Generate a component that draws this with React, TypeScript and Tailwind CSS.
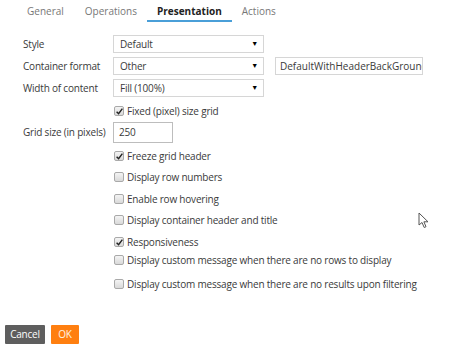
import React from 'react';

const font = { fontFamily: '"Open Sans", "Noto Sans", sans-serif' };

const Check: React.FC<{ checked?: boolean }> = ({ checked }) => (
  <span className="relative inline-block w-[10px] h-[10px] rounded-[2px] border border-[#a9a9a9] bg-gradient-to-b from-[#f4f4f4] to-[#d9d9d9] shrink-0">
    {checked && (
      <svg viewBox="0 0 10 10" className="absolute left-[0px] top-[0px] w-[9px] h-[9px]">
        <path d="M1.8 5.2 L4 7.4 L8.2 1.8" fill="none" stroke="#222" strokeWidth="1.6" />
      </svg>
    )}
  </span>
);

const CheckRow: React.FC<{ label: string; checked?: boolean; className?: string }> = ({ label, checked, className }) => (
  <div className={`flex items-center h-[18px] pl-[114px] gap-[3px] whitespace-nowrap ${className ?? ''}`}>
    <Check checked={checked} />
    <span>{label}</span>
  </div>
);

const Select: React.FC<{ value: string }> = ({ value }) => (
  <div className="flex items-center justify-between w-[151px] h-[18px] border border-[#d6d6d6] pl-[6px] pr-[5px] bg-white">
    <span>{value}</span>
    <span className="text-[7px] text-black">▼</span>
  </div>
);

const FieldRow: React.FC<{ label: string; children: React.ReactNode }> = ({ label, children }) => (
  <div className="flex items-center whitespace-nowrap">
    <div className="w-[113px] pl-[23px] shrink-0">{label}</div>
    {children}
  </div>
);

export default function App() {
  return (
    <div
      className="relative w-[474px] h-[351px] bg-white text-[10px] tracking-[-0.2px] text-[#3a3a3a] overflow-hidden"
      style={font}
    >
      <div className="flex h-[22px] pl-[27px] text-[10px] tracking-normal text-[#777] whitespace-nowrap">
        <div className="pt-[4px] mr-[21px]">General</div>
        <div className="pt-[4px] mr-[10px]">Operations</div>
        <div className="pt-[4px] px-[10px] font-bold text-[#222] border-b-2 border-[#4a9fd8] h-[22px]">Presentation</div>
        <div className="pt-[4px] ml-[10px]">Actions</div>
      </div>

      <div className="flex flex-col gap-[4px] mt-[13px]">
        <FieldRow label="Style">
          <Select value="Default" />
        </FieldRow>
        <FieldRow label="Container format">
          <Select value="Other" />
          <div className="ml-[11px] w-[148px] h-[18px] border border-[#d6d6d6] pl-[4px] flex items-center overflow-hidden whitespace-nowrap tracking-normal">
            DefaultWithHeaderBackGround
          </div>
        </FieldRow>
        <FieldRow label="Width of content">
          <Select value="Fill (100%)" />
        </FieldRow>
      </div>

      <CheckRow className="mt-[5px]" label="Fixed (pixel) size grid" checked />
      <div className="mt-[2px]">
        <FieldRow label="Grid size (in pixels)">
          <div className="w-[60px] h-[21px] border border-[#bdbdbd] pl-[5px] flex items-center">250</div>
        </FieldRow>
      </div>
      <CheckRow className="mt-[4px]" label="Freeze grid header" checked />
      <CheckRow className="mt-[3px]" label="Display row numbers" />
      <CheckRow className="mt-[4px]" label="Enable row hovering" />
      <CheckRow className="mt-[3px]" label="Display container header and title" />
      <CheckRow className="mt-[4px]" label="Responsiveness" checked />
      <CheckRow label="Display custom message when there are no rows to display" />
      <CheckRow className="mt-[6px]" label="Display custom message when there are no results upon filtering" />

      <div className="flex gap-[6px] ml-[5px] mt-[32px]">
        <div className="w-[40px] h-[19px] bg-[#5e5e5e] text-white flex items-center justify-center rounded-[1px]">Cancel</div>
        <div className="w-[28px] h-[19px] bg-[#ff7f10] text-[#fff4e0] flex items-center justify-center rounded-[1px]">OK</div>
      </div>

      <svg className="absolute left-[418px] top-[212px]" width="12" height="17" viewBox="0 0 12 17">
        <path d="M1 1 L1 13 L4 10.5 L6.2 15.5 L8 14.7 L5.9 9.8 L10 9.8 Z" fill="#fff" stroke="#555" strokeWidth="1" strokeLinejoin="round" />
      </svg>
    </div>
  );
}
